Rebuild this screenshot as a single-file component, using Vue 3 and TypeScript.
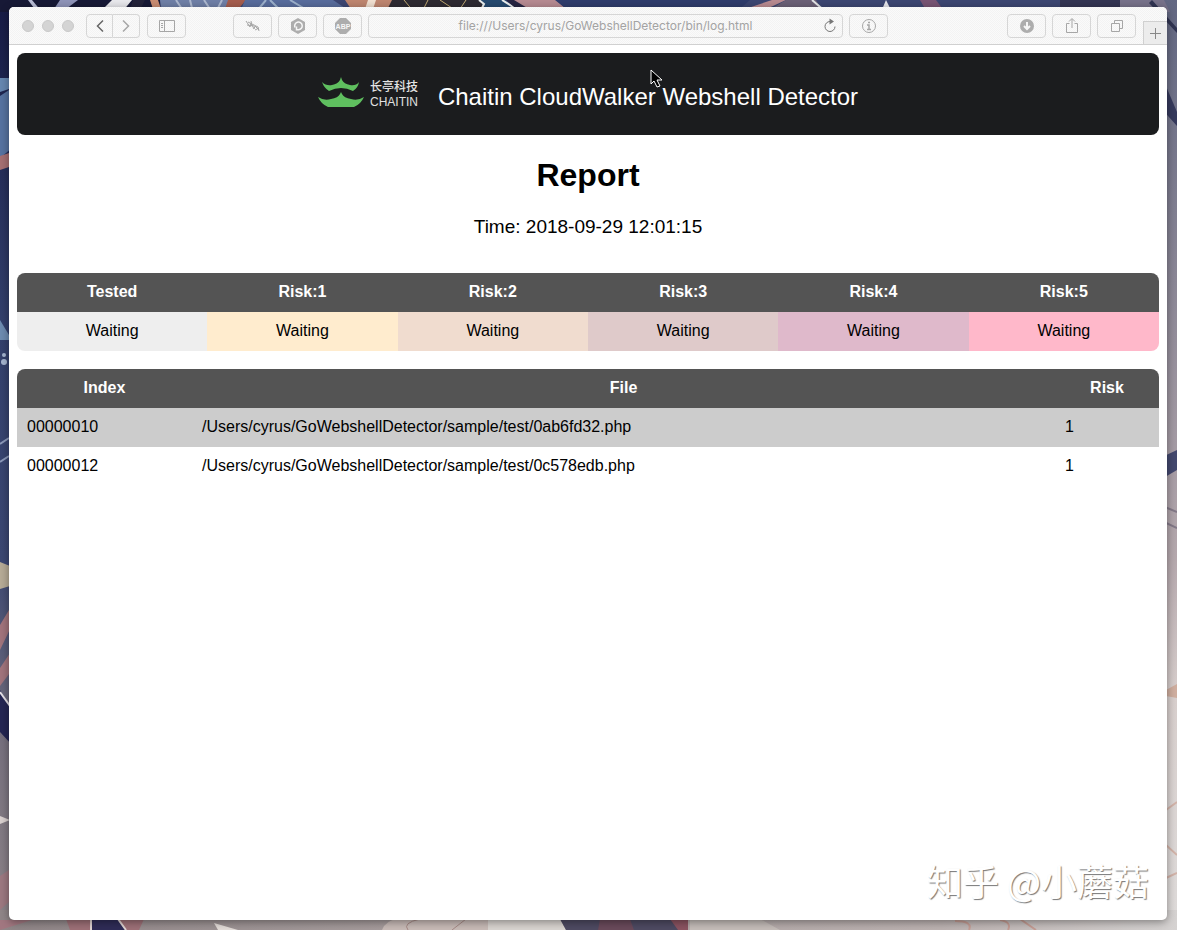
<script setup lang="ts">
interface RiskColumn {
  label: string
  status: string
  tone: string
}

interface LogRow {
  index: string
  file: string
  risk: number
}

const address = 'file:///Users/cyrus/GoWebshellDetector/bin/log.html'

const summary: RiskColumn[] = [
  { label: 'Tested', status: 'Waiting', tone: 'tested' },
  { label: 'Risk:1', status: 'Waiting', tone: 'risk-1' },
  { label: 'Risk:2', status: 'Waiting', tone: 'risk-2' },
  { label: 'Risk:3', status: 'Waiting', tone: 'risk-3' },
  { label: 'Risk:4', status: 'Waiting', tone: 'risk-4' },
  { label: 'Risk:5', status: 'Waiting', tone: 'risk-5' },
]

const rows: LogRow[] = [
  { index: '00000010', file: '/Users/cyrus/GoWebshellDetector/sample/test/0ab6fd32.php', risk: 1 },
  { index: '00000012', file: '/Users/cyrus/GoWebshellDetector/sample/test/0c578edb.php', risk: 1 },
]
</script>

<template>
  <div class="desktop">
    <svg class="wallpaper" viewBox="0 0 1177 930" preserveAspectRatio="none" aria-hidden="true">
      <defs>
        <linearGradient id="left-edge" x1="0" y1="0" x2="0" y2="1">
          <stop offset="0" stop-color="#171b45" />
          <stop offset="0.35" stop-color="#33406c" />
          <stop offset="0.6" stop-color="#3b4772" />
          <stop offset="0.8" stop-color="#77717e" />
          <stop offset="1" stop-color="#8d8388" />
        </linearGradient>
        <linearGradient id="right-edge" x1="0" y1="0" x2="0" y2="1">
          <stop offset="0" stop-color="#626782" />
          <stop offset="0.3" stop-color="#8b8796" />
          <stop offset="0.6" stop-color="#b5a8ad" />
          <stop offset="0.75" stop-color="#d8cfcd" />
          <stop offset="1" stop-color="#dedbda" />
        </linearGradient>
        <linearGradient id="bottom-edge" x1="0" y1="0" x2="1" y2="0">
          <stop offset="0" stop-color="#8f8587" />
          <stop offset="0.4" stop-color="#aaa0a0" />
          <stop offset="0.8" stop-color="#bcb2b1" />
          <stop offset="1" stop-color="#d5d2d1" />
        </linearGradient>
      </defs>
      <rect width="1177" height="930" fill="#3c4672" />
      <rect width="20" height="930" fill="url(#left-edge)" />
      <rect x="1150" width="27" height="930" fill="url(#right-edge)" />
      <rect y="910" width="1177" height="20" fill="url(#bottom-edge)" />

      <rect width="160" height="12" fill="#171936" />
      <path d="M28 0l9 12h5L32 0z" fill="#b9bdd6" />
      <path d="M60 0h18L62 12H52z" fill="#8e93b8" />
      <path d="M100 12L112 0h20l-10 12z" fill="#e8e8ec" />
      <path d="M133 0h12l-6 12h-10z" fill="#23233a" />
      <path d="M150 0h8l4 12h-8z" fill="#c98c72" />
      <path d="M160 0h70l10 12h-78z" fill="#6f7fa6" />
      <path d="M176 0l8 12M190 0l3 12M204 0l8 12M222 0l-6 12" stroke="#aeb9d0" stroke-width="2" />
      <path d="M228 0h18l-10 12h-12z" fill="#a55d4d" />
      <path d="M240 12l5-12h88l18 12z" fill="#586c9c" />
      <path d="M256 12l10-12M282 12L270 0M310 12L290 0" stroke="#9db1cc" stroke-width="2" />
      <path d="M345 0h52l-6 12h-38z" fill="#be856f" />
      <path d="M368 0l-4 12h8l4-12z" fill="#f0dfd0" />
      <path d="M392 0h92v12h-98z" fill="#2e2a32" />
      <path d="M404 0l10 12M428 0l-6 12M440 0l18 12M466 0l-8 12" stroke="#c2ab74" />
      <path d="M481 0l3 12h30L506 0z" fill="#264a70" />
      <path d="M479 0l5 4-4 8M502 0l16 10" stroke="#edf0ef" stroke-width="2" fill="none" />
      <path d="M506 0h10l22 12h-18z" fill="#262442" />
      <path d="M514 0h42l14 12h-36z" fill="#b68a91" />
      <path d="M555 0h195l-14 12H570z" fill="#2f3c6c" />
      <path d="M772 0h14l-26 12h-24z" fill="#b98b91" />
      <path d="M786 0h30l7 12h-57z" fill="#6b6076" />
      <path d="M812 0l14 12" stroke="#e4e6e8" stroke-width="2" />
      <path d="M886 0l-5 12h11z" fill="#e8e8ed" />
      <path d="M920 0h16l9 12h-18z" fill="#785474" />
      <path d="M1060 0h60v12h-60z" fill="#343553" />
      <path d="M1120 0h44l6 12h-50z" fill="#77728a" />
      <path d="M1152 0l25 28v5l-28-30z" fill="#303452" />

      <path d="M0 78h12v10L0 92z" fill="#6687b0" />
      <path d="M0 96l12-8v60L0 158z" fill="#5672a0" />
      <path d="M0 156l12-4v14l-12 4z" fill="#a56f72" />
      <path d="M0 320l12 20H0z" fill="#6d8bb0" />
      <circle cx="4" cy="355" r="2" fill="#a5b5d0" />
      <circle cx="4" cy="362" r="3" fill="#a5b5d0" />
      <path d="M0 444l9-6M0 462l9-6" stroke="#8c99ba" stroke-width="2" />
      <path d="M0 562l10 4v20l-10 3z" fill="#b6ab96" />
      <path d="M0 625l12-20v20L0 650zM0 668l12-18v20L0 686z" fill="#a1747c" />
      <path d="M0 690l12 20v35L0 732z" fill="#242653" />
      <path d="M0 692l10 14" stroke="#e5e1e7" stroke-width="2" />
      <path d="M0 816l10 4-10 4z" fill="#d9d0cf" />
      <path d="M0 876l9-6v32l-9 8z" fill="#9c7880" />

      <path d="M1160 72l17 40v14l-17-19z" fill="#363a5d" />
      <path d="M1160 458l17-8v20l-17 10z" fill="#43486e" />
      <path d="M1160 505l17 7M1160 520l17 8" stroke="#837988" stroke-width="2" />
      <path d="M1166 690l11-6v14l-11-2z" fill="#cfae9f" />
      <path d="M1166 810l11-8M1166 845l11 10M1166 878l11-5" stroke="#d2b3a8" stroke-width="2" />

      <path d="M0 920h32L0 930z" fill="#a17780" />
      <path d="M66 919h78l-5 11H70z" fill="#9d7077" />
      <path d="M90 919h28l8 11H90z" fill="#2f2c57" />
      <path d="M91 919v11M118 919l8 11" stroke="#e0d4d2" stroke-width="2" />
      <path d="M218 930l-4-7 24 7z" fill="#e3dcd8" />
      <path d="M382 930q4-10 16-11h90v11z" fill="#c8bbb7" />
      <path d="M420 919q-18 4-12 11M466 919l-14 11" stroke="#a78a86" fill="none" />
      <path d="M488 919h72l6 11h-78z" fill="#d9d4d0" />
      <path d="M560 919h128v11H566z" fill="#4e4a62" />
      <path d="M600 919h30l4 11h-36z" fill="#6a4a5b" />
      <path d="M670 919h18v11h-10z" fill="#8b5361" />
      <path d="M690 919h70l20 11h-90z" fill="#c5bdb9" />
      <path d="M955 921q18 0 14 9M1000 920q12 2 8 10M1020 919l16 11" stroke="#c49c93" fill="none" stroke-width="2" />
    </svg>

    <div class="window">
      <header class="toolbar">
        <div class="lights">
          <button type="button" aria-label="Close"></button>
          <button type="button" aria-label="Minimize"></button>
          <button type="button" aria-label="Zoom"></button>
        </div>
        <div class="history">
          <button type="button" class="tool dark" aria-label="Back">
            <svg width="12" height="16" viewBox="0 0 12 16"><path d="M9 2.500L3.500 8 9 13.500" stroke-width="1.500" /></svg>
          </button>
          <button type="button" class="tool" aria-label="Forward">
            <svg width="12" height="16" viewBox="0 0 12 16"><path d="M3 2.500L8.500 8 3 13.500" stroke-width="1.500" /></svg>
          </button>
        </div>
        <button type="button" class="tool wide" aria-label="Show sidebar">
          <svg width="16" height="14" viewBox="0 0 16 14"><path d="M.5 1.500h15v11H.5zM5.500 1.500v11M2 4.500h2M2 6.500h2M2 8.500h2" /></svg>
        </button>
        <div class="extensions">
          <button type="button" class="tool wide" aria-label="Translate">
            <svg width="16" height="14" viewBox="0 0 16 14"><path d="M1 2l4 6 1-4 3 6 1-3 4 4M3 3l6 3M6 2l1 5M2 6l7 1M9 6l4 2 1 4M10 11l4-2" /></svg>
          </button>
          <button type="button" class="tool wide" aria-label="Privacy shield">
            <svg width="16" height="16" viewBox="0 0 16 16">
              <path class="solid" d="M8 0l7 4v8l-7 4-7-4V4z" />
              <path class="knock" d="M5 9.500a3.800 3.800 0 1 1 3.500 2.200H6.500V8.500" stroke-width="1.500" />
            </svg>
          </button>
          <button type="button" class="tool wide" aria-label="Ad blocker">
            <svg width="16" height="16" viewBox="0 0 16 16">
              <path class="solid" d="M5 0h6l5 5v6l-5 5H5l-5-5V5z" />
              <text x="8" y="11" text-anchor="middle" class="abp">ABP</text>
            </svg>
          </button>
        </div>
        <div class="address">
          <input type="text" :value="address" aria-label="Address" readonly />
          <button type="button" class="reload" aria-label="Reload">
            <svg width="14" height="16" viewBox="0 0 14 16">
              <path d="M7 3.500a5 5 0 1 0 5 5" />
              <path class="tip" d="M6.500 0.500l4.500 3-4.500 3z" />
            </svg>
          </button>
        </div>
        <button type="button" class="tool wide" aria-label="Page info">
          <svg width="16" height="16" viewBox="0 0 16 16">
            <circle cx="8" cy="8" r="6.500" />
            <path d="M6 7h2v4.500M6 11.500h4M7 4.500h2" stroke-width="1.500" />
          </svg>
        </button>
        <div class="actions">
          <button type="button" class="tool wide" aria-label="Downloads">
            <svg width="16" height="16" viewBox="0 0 16 16">
              <circle class="solid" cx="8" cy="8" r="7" />
              <path class="knock" d="M8 4v7M5 8l3 3 3-3" stroke-width="2" />
            </svg>
          </button>
          <button type="button" class="tool wide" aria-label="Share">
            <svg width="14" height="18" viewBox="0 0 14 18"><path d="M4.500 6.500h-3v9h11v-9h-3M7 11V2M4 4.500l3-3 3 3" /></svg>
          </button>
          <button type="button" class="tool wide" aria-label="Show all tabs">
            <svg width="14" height="14" viewBox="0 0 14 14"><path d="M1.500 4.500h8v8h-8zM4.500 4.500v-3h8v8h-3" /></svg>
          </button>
        </div>
        <button type="button" class="new-tab" aria-label="New tab">
          <svg width="13" height="13" viewBox="0 0 13 13"><path d="M6.500 1v11M1 6.500h11" /></svg>
        </button>
      </header>

      <main class="page">
        <div class="banner">
          <svg class="logo" width="102" height="34" viewBox="0 0 102 34" role="img" aria-label="Chaitin">
            <g fill="#5fbf5f">
              <path d="M4 5q4 4 10 3 6-1 8-5l1-3 1 3q2 4 8 5 6 1 9-3-1 6-6 9-6-3-12-3t-12 3Q6 11 4 5z" />
              <path d="M0 20q6 4 13 2 7-1 9-5l1-2 1 2q2 4 9 5 7 2 13-2-3 7-10 10H10Q3 27 0 20z" />
            </g>
            <text x="52" y="14" class="logo-cn">长亭科技</text>
            <text x="52" y="29" class="logo-en">CHAITIN</text>
          </svg>
          <h1>Chaitin CloudWalker Webshell Detector</h1>
        </div>

        <h2>Report</h2>
        <p class="time">Time: 2018-09-29 12:01:15</p>

        <table class="summary">
          <thead>
            <tr>
              <th v-for="column in summary" :key="column.label" scope="col">{{ column.label }}</th>
            </tr>
          </thead>
          <tbody>
            <tr>
              <td v-for="column in summary" :key="column.label" :class="column.tone">{{ column.status }}</td>
            </tr>
          </tbody>
        </table>

        <table class="log">
          <thead>
            <tr>
              <th scope="col" class="col-index">Index</th>
              <th scope="col">File</th>
              <th scope="col" class="col-risk">Risk</th>
            </tr>
          </thead>
          <tbody>
            <tr v-for="row in rows" :key="row.index">
              <td>{{ row.index }}</td>
              <td>{{ row.file }}</td>
              <td>{{ row.risk }}</td>
            </tr>
          </tbody>
        </table>
      </main>
    </div>

    <div class="watermark">知乎 @小蘑菇</div>

    <svg class="pointer" width="14" height="20" viewBox="0 0 14 20" aria-hidden="true">
      <path d="M1 1v14l3-3 3 6 3-1-3-6h5z" fill="#000" stroke="#fff" />
    </svg>
  </div>
</template>

<style>
body {
  margin: 0;
}
</style>

<style scoped>
.desktop {
  position: relative;
  display: flex;
  box-sizing: border-box;
  min-height: 100vh;
  padding: 7px 10px 10px 9px;
  overflow: hidden;
  font-family: "Liberation Sans", Arial, Helvetica, sans-serif;
  font-size: 16px;
  color: #000;
}

.wallpaper {
  position: absolute;
  inset: 0;
  width: 100%;
  height: 100%;
}

.window {
  position: relative;
  display: flex;
  flex: 1;
  flex-direction: column;
  min-width: 0;
  overflow: hidden;
  background: #fff;
  border-radius: 5px;
  box-shadow: 0 2px 8px rgba(0, 0, 0, 0.4);
}

.toolbar {
  display: flex;
  align-items: center;
  box-sizing: border-box;
  height: 38px;
  padding-left: 13px;
  background: repeating-conic-gradient(#fafafa 0 25%, #f3f3f3 0 50%) 0 0 / 2px 2px;
  border-bottom: 1px solid #d0d0d0;
}

button {
  padding: 0;
  font: inherit;
  border: 0;
  background: none;
}

.lights {
  display: flex;
  gap: 8px;
  margin-right: 12px;
}

.lights button {
  width: 12px;
  height: 12px;
  background: #d4d4d4;
  border: 1px solid #c9c9c9;
  border-radius: 50%;
}

.tool {
  display: flex;
  flex: none;
  align-items: center;
  justify-content: center;
  box-sizing: border-box;
  width: 27px;
  height: 24px;
  border: 1px solid #d6d6d6;
  border-radius: 4px;
}

.wide {
  width: 39px;
}

svg {
  display: block;
}

.toolbar svg {
  fill: none;
  stroke: #a6a6a6;
}

.toolbar .dark svg {
  stroke: #666;
}

.toolbar .solid {
  fill: #adadad;
  stroke: none;
}

.toolbar .knock {
  stroke: #f6f6f6;
}

.abp {
  fill: #f6f6f6;
  stroke: none;
  font-size: 7px;
  font-weight: bold;
}

.history {
  display: flex;
  margin-right: 7px;
}

.history .tool:first-child {
  border-radius: 4px 0 0 4px;
}

.history .tool:last-child {
  border-left: 0;
  border-radius: 0 4px 4px 0;
}

.extensions {
  display: flex;
  gap: 6px;
  margin: 0 6px 0 47px;
}

.address {
  display: flex;
  flex: 1;
  align-items: center;
  box-sizing: border-box;
  min-width: 0;
  height: 24px;
  margin-right: 6px;
  padding: 0 5px 0 19px;
  border: 1px solid #d6d6d6;
  border-radius: 4px;
}

.address input {
  flex: 1;
  min-width: 0;
  padding: 0;
  font-family: Inter, "Liberation Sans", sans-serif;
  font-size: 12px;
  color: #a3a3a3;
  text-align: center;
  background: none;
  border: 0;
  outline: 0;
}

.toolbar .reload svg {
  stroke: #777;
}

.toolbar .reload .tip {
  fill: #777;
  stroke: none;
}

.actions {
  display: flex;
  gap: 6px;
  margin: 0 7px 0 119px;
}

.new-tab {
  display: flex;
  align-items: center;
  justify-content: center;
  align-self: flex-end;
  box-sizing: border-box;
  width: 24px;
  height: 23px;
  background: #ececec;
  border: 1px solid #d0d0d0;
  border-width: 1px 0 0 1px;
}

.toolbar .new-tab svg {
  stroke: #888;
}

.page {
  flex: 1;
  padding: 8px;
}

.banner {
  display: flex;
  align-items: center;
  justify-content: center;
  gap: 18px;
  height: 82px;
  color: #fff;
  background: #1b1c1e;
  border-radius: 8px;
}

.logo-cn {
  fill: #e4e4e4;
  font-family: "Noto Sans CJK SC", sans-serif;
  font-size: 12px;
  font-weight: 500;
}

.logo-en {
  fill: #e0e0e0;
  font-size: 12px;
}

h1 {
  margin: 5px 0 0;
  font-size: 24px;
  font-weight: normal;
  line-height: 28px;
}

h2 {
  margin: 20px 0 0;
  font-size: 32px;
  line-height: 40px;
  text-align: center;
}

.time {
  margin: 20px 0 34px;
  font-size: 19px;
  line-height: 24px;
  text-align: center;
}

table {
  width: 100%;
  margin-bottom: 18px;
  overflow: hidden;
  table-layout: fixed;
  border-spacing: 0;
  border-radius: 8px;
}

th,
td {
  box-sizing: border-box;
  height: 39px;
  padding: 0 10px 2px;
}

th {
  color: #fff;
  background: #545454;
}

.summary td {
  text-align: center;
}

.tested {
  background: #eee;
}

.risk-1 {
  background: #ffecce;
}

.risk-2 {
  background: #f0dccf;
}

.risk-3 {
  background: #dfcaca;
}

.risk-4 {
  background: #dfb9cb;
}

.risk-5 {
  background: #ffb8ca;
}

.log {
  border-radius: 8px 8px 0 0;
}

.log tbody tr:nth-child(odd) {
  background: #ccc;
}

.col-index {
  width: 175px;
}

.col-risk {
  width: 104px;
}

.watermark {
  position: absolute;
  right: 28px;
  bottom: 26px;
  font-family: "Noto Sans CJK SC", sans-serif;
  font-size: 36px;
  line-height: 48px;
  color: #fff;
  text-shadow: 1px 1px 1px #777;
}

.pointer {
  position: absolute;
  top: 69px;
  left: 650px;
}
</style>
